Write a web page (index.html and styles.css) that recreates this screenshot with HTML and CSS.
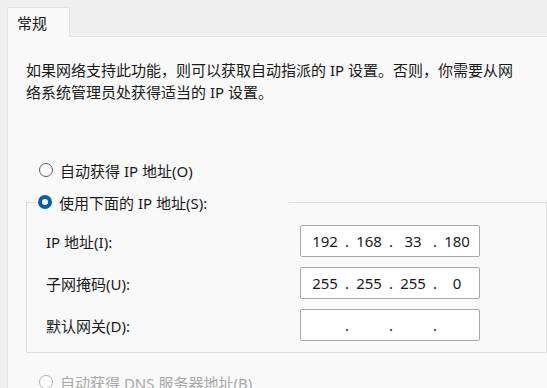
FILE: index.html
```html
<!DOCTYPE html>
<html lang="zh-CN">
<head>
    <meta charset="UTF-8">
    <title>Internet 协议版本 4 (TCP/IPv4) 属性</title>
    <link rel="stylesheet" href="styles.css">
</head>
<body>
    <div class="tabs">
        <div class="tab">常规</div>
    </div>
    <div class="panel">
        <p class="desc">如果网络支持此功能，则可以获取自动指派的 IP 设置。否则，你需要从网<br>络系统管理员处获得适当的 IP 设置。</p>

        <label class="radio-row first">
            <span class="radio"></span>
            <span>自动获得 IP 地址(O)</span>
        </label>

        <fieldset class="group">
            <legend>
                <span class="radio checked"></span>
                <span>使用下面的 IP 地址(S):</span>
            </legend>
            <div class="field">
                <span class="label">IP 地址(I):</span>
                <div class="ip-box">
                    <span class="seg">192</span><span class="dot">.</span><span class="seg">168</span><span class="dot">.</span><span class="seg">33</span><span class="dot">.</span><span class="seg">180</span>
                </div>
            </div>
            <div class="field">
                <span class="label">子网掩码(U):</span>
                <div class="ip-box">
                    <span class="seg">255</span><span class="dot">.</span><span class="seg">255</span><span class="dot">.</span><span class="seg">255</span><span class="dot">.</span><span class="seg">0</span>
                </div>
            </div>
            <div class="field">
                <span class="label">默认网关(D):</span>
                <div class="ip-box">
                    <span class="seg"></span><span class="dot">.</span><span class="seg"></span><span class="dot">.</span><span class="seg"></span><span class="dot">.</span><span class="seg"></span>
                </div>
            </div>
        </fieldset>

        <!-- DNS 部分 (被截断) -->
        <label class="radio-row faded">
            <span class="radio"></span>
            <span>自动获得 DNS 服务器地址(B)</span>
        </label>
    </div>
</body>
</html>
```

FILE: styles.css
```css
body {
    margin: 0;
    padding: 0;
    background-color: #efefef;
    font-family: "Noto Sans", "Noto Sans CJK SC", sans-serif;
    font-size: 15px;
    color: #1a1a1a;
    overflow: hidden;
}

/* Aba */
.tabs {
    display: flex;
    padding: 7px 0 0 7px;
    height: 29px;
}

.tab {
    width: 52px;
    height: 29px;
    padding-left: 9px;
    line-height: 30px;
    background-color: #f9f9f9;
    border: 1px solid #e3e3e3;
    border-bottom: none;
    position: relative;
    z-index: 1;
}

.panel {
    margin-left: 7px;
    padding-left: 18px;
    height: 400px;
    background-color: #f9f9f9;
    border-top: 1px solid #e3e3e3;
    border-left: 1px solid #e3e3e3;
}

.desc {
    margin: 0;
    padding-top: 22px;
    line-height: 22px;
    white-space: nowrap;
}

/* Radios */
.radio-row {
    display: flex;
    align-items: center;
    height: 22px;
    padding-left: 13px;
}

.radio-row.first {
    margin-top: 56px;
}

.radio-row.faded {
    margin-top: 18px;
    color: #a8a8a8;
}

.radio {
    width: 12px;
    height: 12px;
    border: 1px solid #5c5c5c;
    border-radius: 50%;
    background-color: #fdfdfd;
    margin-right: 7px;
    flex-shrink: 0;
}

.radio.checked {
    width: 6px;
    height: 6px;
    border: 4px solid #005fb8;
    background-color: #ffffff;
}

.faded .radio {
    border-color: #b5b5b5;
}

/* Grupo */
.group {
    margin: 10px 0 0 0;
    padding: 12px 0 11px 19px;
    border: 1px solid #dedede;
    border-right-color: #e3e3e3;
}

.group legend {
    display: flex;
    align-items: center;
    width: 251px;
    height: 22px;
    padding: 0 0 0 2px;
    margin-left: -10px;
}

.field {
    display: grid;
    grid-template-columns: 254px 180px;
    align-items: center;
    height: 32px;
    margin-bottom: 10px;
}

.field:last-child {
    margin-bottom: 0;
}

.ip-box {
    display: flex;
    align-items: center;
    box-sizing: border-box;
    height: 32px;
    padding-left: 6px;
    background-color: #ffffff;
    border: 1px solid #a9a9a9;
    border-radius: 2px;
}

.seg {
    width: 36px;
    text-align: center;
}

.dot {
    width: 8px;
    text-align: center;
}
```
